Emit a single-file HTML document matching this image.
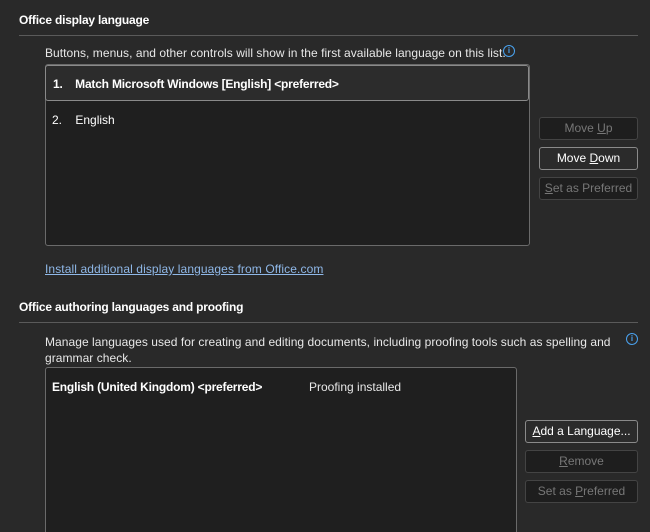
<!DOCTYPE html>
<html><head><style>
html{overflow:hidden;height:532px}
body{margin:0;width:650px;height:532px;background:#292929;font-family:"Liberation Sans",sans-serif;color:#fff;font-size:12px;position:relative;overflow:hidden}
.a{position:absolute;white-space:nowrap}
.h{font-weight:bold;font-size:12px;letter-spacing:-0.2px}
.line{position:absolute;height:1px;background:#5a5a5a}
.box{position:absolute;background:#1f1f1f;border:1px solid #6a6a6a;border-radius:3px}
.btn{position:absolute;border:1px solid #444;background:#1e1e1e;border-radius:3px;color:#777;text-align:center;font-size:12px;box-sizing:border-box}
.btn.on{background:#2b2b2b;border-color:#8a8a8a;color:#fff}
.info{position:absolute;width:10px;height:10px;border:1px solid #4aa3f0;border-radius:50%;color:#4aa3f0;font-size:8px;line-height:10px;text-align:center;font-weight:bold}
</style></head><body>
<div class="a h" style="left:19px;top:13px">Office display language</div>
<div class="line" style="left:19px;top:35px;width:619px"></div>
<div class="a" style="left:45px;top:46px;letter-spacing:0.05px;color:#e8e8e8">Buttons, menus, and other controls will show in the first available language on this list.</div>
<div class="info" style="left:503px;top:45px">i</div>
<div class="box" style="left:45px;top:64px;width:483px;height:180px"></div>
<div class="a" style="left:45px;top:65px;width:482px;height:34px;border:1px solid #8a8a8a;border-radius:3px;background:#2c2c2c"></div>
<div class="a h" style="left:53px;top:77px">1.&nbsp;&nbsp;&nbsp;&nbsp;Match Microsoft Windows [English] &lt;preferred&gt;</div>
<div class="a" style="left:52px;top:113px">2.&nbsp;&nbsp;&nbsp;&nbsp;English</div>
<div class="btn" style="left:539px;top:117px;width:99px;height:23px;line-height:21px">Move <u>U</u>p</div>
<div class="btn on" style="left:539px;top:147px;width:99px;height:23px;line-height:21px">Move <u>D</u>own</div>
<div class="btn" style="left:539px;top:177px;width:99px;height:23px;line-height:21px"><u>S</u>et as Preferred</div>
<div class="a" style="left:45px;top:262px;color:#8fb8e8;text-decoration:underline;letter-spacing:0.1px">Install additional display languages from Office.com</div>
<div class="a h" style="left:19px;top:300px">Office authoring languages and proofing</div>
<div class="line" style="left:19px;top:322px;width:619px"></div>
<div class="a" style="left:45px;top:334px;color:#e8e8e8;letter-spacing:0.05px;line-height:16px">Manage languages used for creating and editing documents, including proofing tools such as spelling and<br>grammar check.</div>
<div class="info" style="left:626px;top:333px">i</div>
<div class="box" style="left:45px;top:367px;width:470px;height:180px"></div>
<div class="a h" style="left:52px;top:380px">English (United Kingdom) &lt;preferred&gt;</div>
<div class="a" style="left:309px;top:380px;color:#e8e8e8">Proofing installed</div>
<div class="btn on" style="left:525px;top:420px;width:113px;height:23px;line-height:21px"><u>A</u>dd a Language...</div>
<div class="btn" style="left:525px;top:450px;width:113px;height:23px;line-height:21px"><u>R</u>emove</div>
<div class="btn" style="left:525px;top:480px;width:113px;height:23px;line-height:21px">Set as <u>P</u>referred</div>
</body></html>
